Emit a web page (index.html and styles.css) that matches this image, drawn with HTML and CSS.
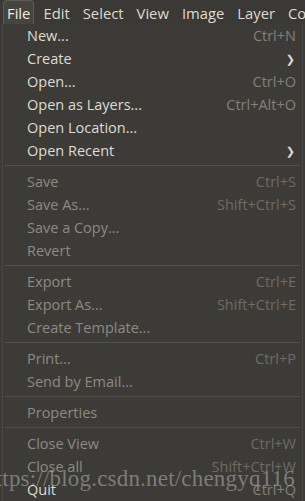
FILE: index.html
```html
<!DOCTYPE html>
<html>
	<head>
		<meta charset="utf-8">
		<title>File</title>
		<link rel="stylesheet" href="styles.css">
	</head>
	<body>
	<div class="menubar">
		<span class="top active">File</span>
		<span class="top">Edit</span>
		<span class="top">Select</span>
		<span class="top">View</span>
		<span class="top">Image</span>
		<span class="top">Layer</span>
		<span class="top">Colors</span>
	</div>
	<div class="menu">
		<div class="item"><span>New...</span><span class="key">Ctrl+N</span></div>
		<div class="item"><span>Create</span><span class="arrow">&#x276F;</span></div>
		<div class="item"><span>Open...</span><span class="key">Ctrl+O</span></div>
		<div class="item"><span>Open as Layers...</span><span class="key">Ctrl+Alt+O</span></div>
		<div class="item"><span>Open Location...</span></div>
		<div class="item"><span>Open Recent</span><span class="arrow">&#x276F;</span></div>
		<div class="sep"></div>
		<div class="item off"><span>Save</span><span class="key">Ctrl+S</span></div>
		<div class="item off"><span>Save As...</span><span class="key">Shift+Ctrl+S</span></div>
		<div class="item off"><span>Save a Copy...</span></div>
		<div class="item off"><span>Revert</span></div>
		<div class="sep"></div>
		<div class="item off"><span>Export</span><span class="key">Ctrl+E</span></div>
		<div class="item off"><span>Export As...</span><span class="key">Shift+Ctrl+E</span></div>
		<div class="item off"><span>Create Template...</span></div>
		<div class="sep"></div>
		<div class="item off"><span>Print...</span><span class="key">Ctrl+P</span></div>
		<div class="item off"><span>Send by Email...</span></div>
		<div class="sep"></div>
		<div class="item off"><span>Properties</span></div>
		<div class="sep"></div>
		<div class="item off"><span>Close View</span><span class="key">Ctrl+W</span></div>
		<div class="item off"><span>Close all</span><span class="key">Shift+Ctrl+W</span></div>
		<div class="item"><span>Quit</span><span class="key">Ctrl+Q</span></div>
	</div>
	<div class="mark">https://blog.csdn.net/chengyq116</div>
	</body>
</html>
```

FILE: styles.css
```css
html, body {
	margin: 0;
	width: 305px;
	height: 501px;
	overflow: hidden;
	background: #3c3b37;
	font-family: "Open Sans", "DejaVu Sans", sans-serif;
	font-size: 14.5px;
	color: #dfdbd2;
	position: relative;
}
.menubar {
	display: flex;
	height: 24px;
	padding-left: 3px;
	background: #3a3935;
	white-space: nowrap;
	overflow: hidden;
	font-size: 14.8px;
}
.top {
	padding: 1px 3px 0 3px;
	margin-right: 5px;
	line-height: 22px;
	color: #dfdbd2;
	border: 1px solid transparent;
	border-bottom: none;
}
.top.active {
	background: #45443f;
	border-color: #5c5b56;
	border-radius: 4px 4px 0 0;
	color: #efece6;
}
.menu {
	margin: 0 2px 0 2px;
	padding-top: 0;
	background: #3c3b37;
	border-left: 1px solid #4a4944;
	border-right: 1px solid #4a4944;
	height: 480px;
}
.item {
	display: flex;
	justify-content: space-between;
	align-items: center;
	height: 23px;
	padding: 0 6px 0 24px;
}
.item.off {
	color: #8d8a83;
}
.key {
	color: #857f78;
}
.item.off .key {
	color: #6d6b65;
}
.arrow {
	font-size: 11px;
	color: #dfdbd2;
	padding-right: 1px;
}
.sep {
	height: 1px;
	margin: 3px 2px 4px 2px;
	background: #504f4a;
}
.mark {
	position: absolute;
	left: -16px;
	top: 466px;
	font-family: "Liberation Serif", serif;
	font-size: 23px;
	letter-spacing: 0.2px;
	color: rgba(190, 190, 190, 0.5);
	white-space: nowrap;
}
```
